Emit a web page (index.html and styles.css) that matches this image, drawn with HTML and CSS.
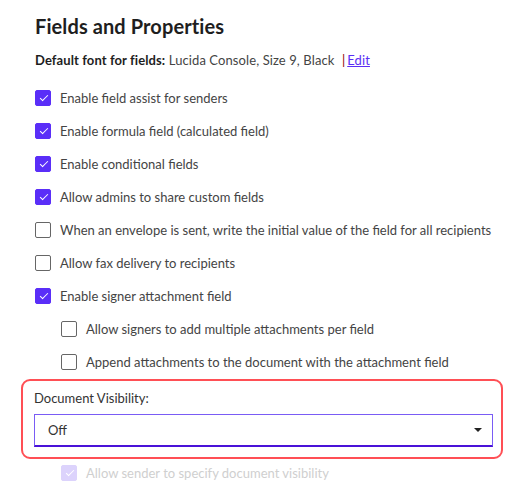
FILE: index.html
```html
<!DOCTYPE html>
<html>
<head>
<meta charset="utf-8">
<link rel="stylesheet" href="styles.css">
</head>
<body>
<div class="page">
  <h1 class="title">Fields and Properties</h1>
  <p class="font-line"><b>Default font for fields:</b> Lucida Console, Size 9, Black <span class="sep">|</span><a class="edit" href="#">Edit</a></p>
  <ul class="opts">
    <li class="opt"><span class="cb on"></span>Enable field assist for senders</li>
    <li class="opt"><span class="cb on"></span>Enable formula field (calculated field)</li>
    <li class="opt"><span class="cb on"></span>Enable conditional fields</li>
    <li class="opt"><span class="cb on"></span>Allow admins to share custom fields</li>
    <li class="opt"><span class="cb"></span>When an envelope is sent, write the initial value of the field for all recipients</li>
    <li class="opt"><span class="cb"></span>Allow fax delivery to recipients</li>
    <li class="opt"><span class="cb on"></span>Enable signer attachment field</li>
    <li class="opt sub"><span class="cb"></span>Allow signers to add multiple attachments per field</li>
    <li class="opt sub"><span class="cb"></span>Append attachments to the document with the attachment field</li>
  </ul>
  <div class="highlight">
    <div class="label">Document Visibility:</div>
    <div class="select"><span>Off</span><span class="caret"></span></div>
  </div>
  <div class="opt sub disabled"><span class="cb on"></span>Allow sender to specify document visibility</div>
</div>
</body>
</html>
```
FILE: styles.css
```css
html, body { margin: 0; padding: 0; background: #fff; }
body { font-family: "Lato", "Noto Sans", sans-serif; color: #333; }
.page { padding: 14px 0 0 35px; width: 477px; }
.title { margin: 0; font-size: 20px; font-weight: 700; color: #1e1e1e; line-height: 24px; letter-spacing: 0.1px; }
.font-line { margin: 14px 0 0; font-size: 13px; line-height: 16px; color: #444; letter-spacing: 0.1px; }
.font-line b { color: #1e1e1e; }
.sep { color: #8b0000; margin-left: 4px; margin-right: 2px; }
.edit { color: #5b2ef5; text-decoration: underline; }
.opts { list-style: none; margin: 13px 0 0; padding: 0; }
.opt { display: flex; align-items: center; height: 33px; font-size: 13px; color: #444; white-space: nowrap; }
.cb { width: 14px; height: 14px; border: 1px solid #666; border-radius: 2px; margin-right: 9px; flex: none; position: relative; background: #fff; }
.cb.on { background: #5a2ef8; border-color: #5a2ef8; }
.cb.on::after { content: ""; position: absolute; left: 4px; top: 4px; width: 7px; height: 3px; border-left: 1.3px solid #fff; border-bottom: 1.3px solid #fff; transform: rotate(-45deg); }
.sub { padding-left: 26px; }
.highlight { margin: 1px 0 0 -14px; width: 482px; border: 2px solid #ff4f55; border-radius: 9px; padding: 8px 8px 8px 11px; box-sizing: border-box; height: 80px; }
.label { font-size: 13px; color: #333; line-height: 16px; margin: 1px 0 8px 0; }
.select { height: 33px; box-sizing: border-box; border: 1px solid #7a5cf5; border-bottom: 2px solid #4a12d8; display: flex; align-items: center; justify-content: space-between; padding: 0 10px 0 13px; font-size: 13px; color: #333; }
.caret { width: 0; height: 0; border-left: 4px solid transparent; border-right: 4px solid transparent; border-top: 4px solid #222; }
.disabled { color: #cfcfcf; margin-top: -3px; }
.disabled .cb.on { background: #dcd3fc; border-color: #dcd3fc; }
```
